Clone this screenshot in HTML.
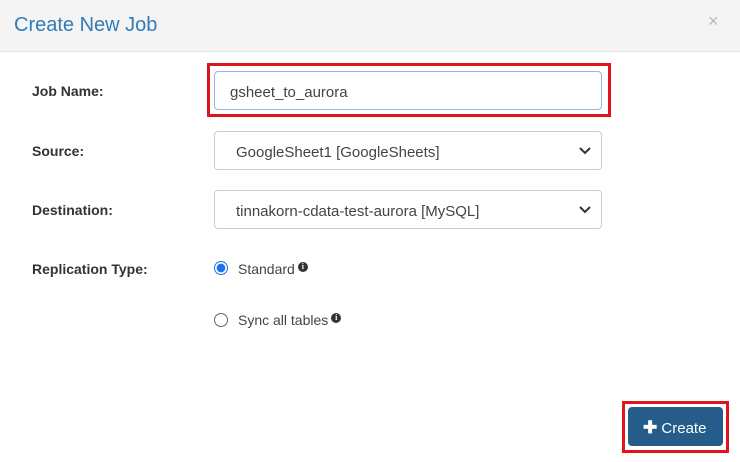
<!DOCTYPE html>
<html><head><style>
body{margin:0;width:740px;height:462px;background:#fff;font-family:"Liberation Sans",sans-serif;position:relative;overflow:hidden}
.hdr{position:absolute;left:0;top:0;width:740px;height:51px;background:#f4f4f4;border-bottom:1px solid #e2e2e2}
.title{position:absolute;left:14px;top:14px;font-size:20px;color:#337ab7}
.x{position:absolute;left:708px;top:11px;font-size:18px;color:#b8b8b8}
.lbl{position:absolute;left:32px;font-size:14px;font-weight:bold;color:#333}
.box{position:absolute;left:214px;width:388px;height:39px;border:1px solid #ccc;border-radius:4px;box-sizing:border-box;font-size:15px;color:#444;padding:12px 0 0 21px}
.red{position:absolute;border:3px solid #e0141e;box-sizing:border-box}
.chev{position:absolute;right:10px;top:12px}
.radio{position:absolute;left:214px;width:14px;height:14px;border-radius:50%;box-sizing:border-box}
.rt{position:absolute;left:238px;font-size:14px;color:#444}
.i{display:inline-block;width:10px;height:10px;border-radius:50%;background:#333;color:#fff;font-size:8px;font-weight:bold;text-align:center;line-height:10px;vertical-align:5px;margin-left:3px;font-family:"Liberation Serif",serif}
.btn{position:absolute;left:628px;top:407px;width:95px;height:39px;background:#255c8a;border-radius:4px;color:#fff;font-size:15px;box-sizing:border-box;padding:11px 0 0 15px}
</style></head><body>
<div class="hdr"><div class="title">Create New Job</div><div class="x">×</div></div>
<div class="lbl" style="top:83px">Job Name:</div>
<div class="red" style="left:207px;top:63px;width:404px;height:54px"></div>
<div class="box" style="top:71px;border-color:#8fb8e6;padding-left:15px">gsheet_to_aurora</div>
<div class="lbl" style="top:143px">Source:</div>
<div class="box" style="top:131px">GoogleSheet1 [GoogleSheets]<svg class="chev" width="12" height="14" viewBox="0 0 12 14"><path d="M1 4l5 5 5-5" stroke="#333" stroke-width="2" fill="none"/></svg></div>
<div class="lbl" style="top:202px">Destination:</div>
<div class="box" style="top:190px">tinnakorn-cdata-test-aurora [MySQL]<svg class="chev" width="12" height="14" viewBox="0 0 12 14"><path d="M1 4l5 5 5-5" stroke="#333" stroke-width="2" fill="none"/></svg></div>
<div class="lbl" style="top:261px">Replication Type:</div>
<div class="radio" style="top:261px;border:1.5px solid #1a73e8;background:radial-gradient(circle,#1a73e8 4px,#fff 4.6px)"></div>
<div class="rt" style="top:261px">Standard<span class="i">i</span></div>
<div class="radio" style="top:313px;border:1.5px solid #666"></div>
<div class="rt" style="top:312px">Sync all tables<span class="i">i</span></div>
<div class="red" style="left:622px;top:401px;width:107px;height:52px"></div>
<div class="btn"><b style="font-size:17px">✚</b> Create</div>
</body></html>
